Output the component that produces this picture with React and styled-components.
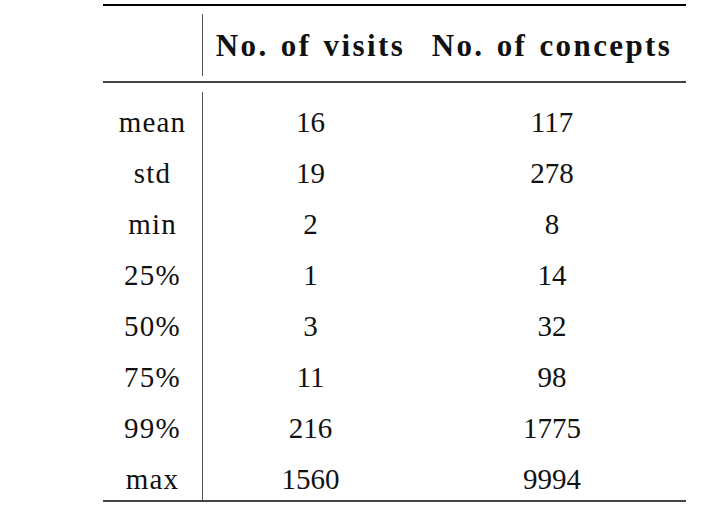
import React from "react";
import styled, { createGlobalStyle } from "styled-components";

const rows = [
  ["mean", "16", "117"],
  ["std", "19", "278"],
  ["min", "2", "8"],
  ["25%", "1", "14"],
  ["50%", "3", "32"],
  ["75%", "11", "98"],
  ["99%", "216", "1775"],
  ["max", "1560", "9994"],
];

const GlobalStyle = createGlobalStyle`
  html, body {
    margin: 0;
    padding: 0;
    background: #fff;
  }
  body {
    width: 717px;
    height: 530px;
    overflow: hidden;
    font-family: "Liberation Serif", "Times New Roman", serif;
    color: #111;
  }
`;

const Table = styled.div`
  width: 583px;
  margin: 4px 0 0 103px;
  display: flex;
  flex-direction: column;
`;

const Rule = styled.div`
  height: 2px;
  background: ${(p) => p.$color || "#444"};
  margin-top: ${(p) => p.$above || 0}px;
  margin-bottom: ${(p) => p.$below || 0}px;
`;

const Row = styled.div`
  display: grid;
  grid-template-columns: 100px 215px 268px;
  height: ${(p) => p.$height}px;
`;

const Cell = styled.div`
  display: flex;
  align-items: flex-end;
  justify-content: center;
  padding-bottom: ${(p) => p.$bottom}px;
  box-sizing: border-box;
  border-right: ${(p) => (p.$divider ? "1px solid #555" : "none")};
  font-size: 29px;
  line-height: 1;
  letter-spacing: ${(p) => (p.$word ? "1.2px" : "0")};
`;

const HeadCell = styled(Cell)`
  font-weight: bold;
  font-size: 31px;
  letter-spacing: 2.4px;
  word-spacing: 2px;
`;

export default function App() {
  return (
    <>
      <GlobalStyle />
      <Table>
        <Rule $color="#000" $below={8} />
        <Row $height={62}>
          <HeadCell $divider $bottom={15} />
          <HeadCell $bottom={15}>No. of visits</HeadCell>
          <HeadCell $bottom={15}>No. of concepts</HeadCell>
        </Row>
        <Rule $above={5} $below={9} />
        {rows.map(([label, visits, concepts]) => (
          <Row key={label} $height={51}>
            <Cell $divider $word $bottom={6}>
              {label}
            </Cell>
            <Cell $bottom={6}>{visits}</Cell>
            <Cell $bottom={6}>{concepts}</Cell>
          </Row>
        ))}
        <Rule />
      </Table>
    </>
  );
}
